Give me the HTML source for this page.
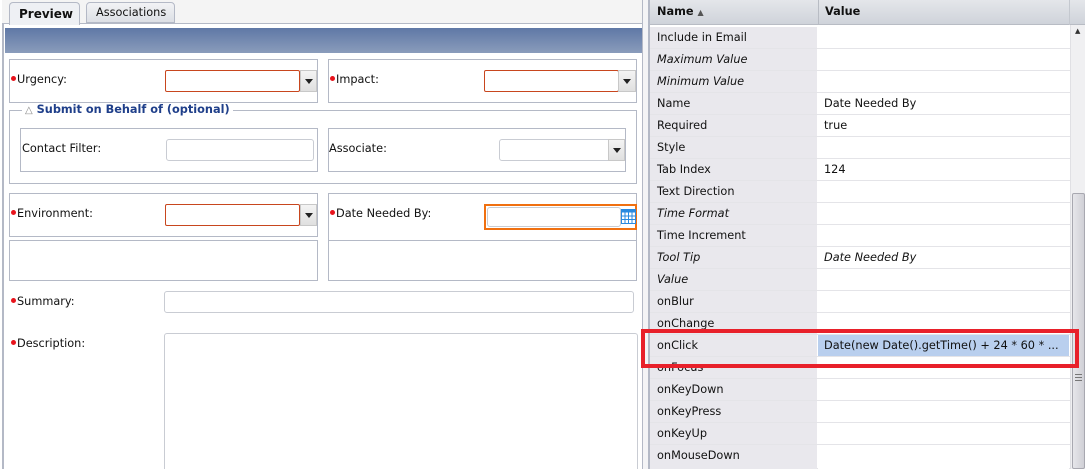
<!DOCTYPE html>
<html style="overflow:hidden;width:1085px;height:469px"><head><style>
*{margin:0;padding:0;box-sizing:border-box}
body{width:1085px;height:469px;overflow:hidden;background:#fff;font-family:"DejaVu Sans","Liberation Sans",sans-serif;font-size:11.3px;color:#111;position:relative}
.a{position:absolute}
.box{position:absolute;border:1px solid #b4b9c6;background:#fff}
.lbl{position:absolute;white-space:nowrap}
.dot{display:inline-block;width:5px;height:5px;border-radius:50%;background:#e8141c;margin-right:1px;vertical-align:2px}
.sel{position:absolute;border:1px solid #c8461e;border-radius:2px;background:#fff}
.btn{position:absolute;background:linear-gradient(#f4f4f4,#e0e0e0);border:1px solid #c8c8c8}
.btn:after{content:"";position:absolute;left:4px;top:8px;border-left:4px solid transparent;border-right:4px solid transparent;border-top:5px solid #222}
.inp{position:absolute;border:1px solid #c9ccd3;border-radius:3px;background:#fff}
.row{position:absolute;left:650px;width:420px;height:22px;border-bottom:1px solid #e4e4e8}
.row .n{position:absolute;left:0;top:0;width:167px;height:21px;background:#e9e8ed;padding:4px 0 0 7px;white-space:nowrap}
.row .v{position:absolute;left:168px;top:0;width:251px;height:21px;background:#fff;padding:4px 0 0 6px;white-space:nowrap}
.i{font-style:italic}
</style></head><body>
<div class="a" style="left:2px;top:0;width:641px;height:24px;background:#f4f4f4;border-bottom:1px solid #b4b9c6;border-right:1px solid #b4b9c6"></div>
<div class="a" style="left:9px;top:2px;width:71px;height:23px;background:#eef0f4;border:1px solid #b4b9c6;border-bottom:none;border-radius:4px 4px 0 0;font-weight:bold;font-size:12px;padding:4px 0 0 9px">Preview</div>
<div class="a" style="left:86px;top:2px;width:89px;height:21px;background:linear-gradient(#f2f3f5,#dcdfe5);border:1px solid #b4b9c6;border-radius:4px 4px 0 0;padding:3px 0 0 9px">Associations</div>
<div class="a" style="left:2px;top:24px;width:642px;height:445px;border-left:2px solid #b4b9c6;border-right:2px solid #b4b9c6"></div>
<div class="a" style="left:5px;top:28px;width:637px;height:25px;background:linear-gradient(#5f78a6,#8a9cbb)"></div>

<div class="box" style="left:9px;top:59px;width:309px;height:44px"></div>
<div class="lbl" style="left:11px;top:73px"><span class="dot"></span>Urgency:</div>
<div class="sel" style="left:165px;top:70px;width:135px;height:22px"></div>
<div class="btn" style="left:300px;top:70px;width:17px;height:22px"></div>

<div class="box" style="left:328px;top:59px;width:309px;height:44px"></div>
<div class="lbl" style="left:330px;top:73px"><span class="dot"></span>Impact:</div>
<div class="sel" style="left:484px;top:70px;width:135px;height:22px"></div>
<div class="btn" style="left:618px;top:70px;width:18px;height:22px"></div>

<div class="a" style="left:9px;top:110px;width:628px;height:74px;border:1px solid #b4b9c6"></div>
<div class="lbl" style="left:22px;top:103px;background:#fff;padding:0 3px;color:#1f3f8a;font-weight:bold"><span style="color:#888;font-weight:normal;font-size:10px">△</span> Submit on Behalf of (optional)</div>
<div class="box" style="left:20px;top:128px;width:298px;height:44px"></div>
<div class="lbl" style="left:22px;top:142px">Contact Filter:</div>
<div class="inp" style="left:166px;top:139px;width:148px;height:22px"></div>
<div class="box" style="left:328px;top:128px;width:298px;height:44px"></div>
<div class="lbl" style="left:329px;top:142px">Associate:</div>
<div class="inp" style="left:499px;top:139px;width:110px;height:22px;border-radius:3px 0 0 3px"></div>
<div class="btn" style="left:608px;top:139px;width:17px;height:22px"></div>

<div class="box" style="left:9px;top:193px;width:309px;height:44px"></div>
<div class="lbl" style="left:11px;top:207px"><span class="dot"></span>Environment:</div>
<div class="sel" style="left:165px;top:204px;width:135px;height:22px"></div>
<div class="btn" style="left:300px;top:204px;width:17px;height:22px"></div>

<div class="box" style="left:328px;top:193px;width:309px;height:48px"></div>
<div class="lbl" style="left:330px;top:207px"><span class="dot"></span>Date Needed By:</div>
<div class="a" style="left:484px;top:204px;width:153px;height:26px;border:2px solid #f07010;background:#fff"></div>
<div class="inp" style="left:487px;top:207px;width:134px;height:20px"></div>
<svg class="a" style="left:621px;top:209px" width="15" height="15" viewBox="0 0 15 15"><rect x="0.5" y="0.5" width="14" height="14" fill="#fff" stroke="#2a8ae0"/><rect x="0.5" y="0.5" width="14" height="3" fill="#2a8ae0"/><path d="M0 7h15M0 10.5h15M4 3v12M7.5 3v12M11 3v12" stroke="#2a8ae0"/></svg>

<div class="box" style="left:9px;top:240px;width:309px;height:41px"></div>
<div class="box" style="left:328px;top:240px;width:309px;height:41px"></div>

<div class="lbl" style="left:11px;top:295px"><span class="dot"></span>Summary:</div>
<div class="inp" style="left:164px;top:291px;width:470px;height:22px"></div>
<div class="lbl" style="left:11px;top:337px"><span class="dot"></span>Description:</div>
<div class="inp" style="left:164px;top:333px;width:474px;height:136px;border-bottom:none;border-radius:3px 3px 0 0"></div>

<div class="a" style="left:643px;top:0;width:5px;height:469px;background:#f4f4f6"></div>
<div class="a" style="left:648px;top:0;width:437px;height:469px;border-left:2px solid #b4b9c6;background:#fff"></div>
<div class="a" style="left:650px;top:0;width:435px;height:25px;background:linear-gradient(#e4e6ea,#cfd3da);border-bottom:1px solid #b8bcc4"></div>
<div class="a" style="left:818px;top:0;width:1px;height:25px;background:#b8bcc4"></div>
<div class="a" style="left:1069px;top:0;width:1px;height:25px;background:#c4c8cf"></div>
<div class="lbl" style="left:657px;top:5px;font-weight:bold">Name <span style="font-size:8px;color:#555">▲</span></div>
<div class="lbl" style="left:825px;top:5px;font-weight:bold">Value</div>

<div class="row" style="top:27px"><div class="n">Include in Email</div><div class="v"></div></div>
<div class="row" style="top:49px"><div class="n i">Maximum Value</div><div class="v"></div></div>
<div class="row" style="top:71px"><div class="n i">Minimum Value</div><div class="v"></div></div>
<div class="row" style="top:93px"><div class="n">Name</div><div class="v">Date Needed By</div></div>
<div class="row" style="top:115px"><div class="n">Required</div><div class="v">true</div></div>
<div class="row" style="top:137px"><div class="n">Style</div><div class="v"></div></div>
<div class="row" style="top:159px"><div class="n">Tab Index</div><div class="v">124</div></div>
<div class="row" style="top:181px"><div class="n">Text Direction</div><div class="v"></div></div>
<div class="row" style="top:203px"><div class="n i">Time Format</div><div class="v"></div></div>
<div class="row" style="top:225px"><div class="n">Time Increment</div><div class="v"></div></div>
<div class="row" style="top:247px"><div class="n i">Tool Tip</div><div class="v i">Date Needed By</div></div>
<div class="row" style="top:269px"><div class="n i">Value</div><div class="v"></div></div>
<div class="row" style="top:291px"><div class="n">onBlur</div><div class="v"></div></div>
<div class="row" style="top:313px"><div class="n">onChange</div><div class="v"></div></div>
<div class="row" style="top:335px"><div class="n">onClick</div><div class="v" style="background:#b9cfee">Date(new Date().getTime() + 24 * 60 * ...</div></div>
<div class="row" style="top:357px"><div class="n">onFocus</div><div class="v"></div></div>
<div class="row" style="top:379px"><div class="n">onKeyDown</div><div class="v"></div></div>
<div class="row" style="top:401px"><div class="n">onKeyPress</div><div class="v"></div></div>
<div class="row" style="top:423px"><div class="n">onKeyUp</div><div class="v"></div></div>
<div class="row" style="top:445px;height:24px"><div class="n" style="height:24px">onMouseDown</div><div class="v" style="height:24px"></div></div>

<div class="a" style="left:1070px;top:25px;width:15px;height:444px;background:#f0f0f2;border-left:1px solid #e0e0e4"></div>
<div class="lbl" style="left:1075px;top:27px;font-size:7px;color:#333">▲</div>
<div class="a" style="left:1072px;top:193px;width:13px;height:276px;background:linear-gradient(90deg,#e6e6ea,#d0d0d6);border:1px solid #a8a8b0;border-radius:2px"></div>
<div class="a" style="left:1075px;top:374px;width:7px;height:7px;border-top:1px solid #777;border-bottom:1px solid #777"></div>
<div class="a" style="left:1075px;top:377px;width:7px;height:1px;background:#777"></div>

<div class="a" style="left:641px;top:329px;width:438px;height:39px;border:4px solid #e8202a"></div>
</body></html>
